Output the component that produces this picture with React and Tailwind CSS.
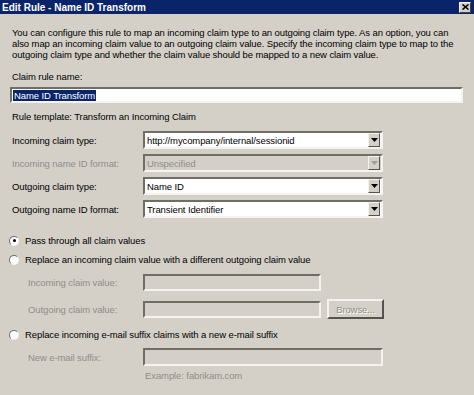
import React from 'react';

const sunken = 'border-2 border-t-[#6f6d68] border-l-[#6f6d68] border-b-[#f4f3f0] border-r-[#f4f3f0]';
const raised = 'border-2 border-t-[#f4f3f0] border-l-[#f4f3f0] border-b-[#55534f] border-r-[#55534f]';

function Arrow({ disabled }) {
    return (
        <svg width="7" height="4" viewBox="0 0 7 4">
            <path d="M0 0H7L3.5 4Z" fill={disabled ? '#a09e98' : '#000'} />
        </svg>
    );
}

function Combo({ value, disabled }) {
    return (
        <div className={`flex h-[18px] w-[240px] items-center ${sunken} ${disabled ? 'bg-[#d4d0c8] text-[#908e88]' : 'bg-white text-black'}`}>
            <span className="flex-1 truncate pl-[2px]">{value}</span>
            <div className="mr-[1px] flex h-[14px] w-[12px] items-center justify-center border border-t-[#f4f3f0] border-l-[#f4f3f0] border-b-[#55534f] border-r-[#55534f] bg-[#d4d0c8]">
                <Arrow disabled={disabled} />
            </div>
        </div>
    );
}

function Row({ label, disabled, children, className = '' }) {
    return (
        <div className={`flex items-center ${className}`}>
            <span className={`w-[131px] shrink-0 ${disabled ? 'text-[#908e88]' : ''}`}>{label}</span>
            {children}
        </div>
    );
}

function Radio({ checked, label, className = '' }) {
    return (
        <div className={`flex h-[11px] items-center ${className}`}>
            <span className="ml-[-3px] mr-[6px] flex h-[10px] w-[10px] items-center justify-center rounded-full border border-t-[#6f6d68] border-l-[#6f6d68] border-b-[#f4f3f0] border-r-[#f4f3f0] bg-white">
                {checked && <span className="h-[3px] w-[3px] rounded-full bg-black" />}
            </span>
            <span>{label}</span>
        </div>
    );
}

export default function App() {
    return (
        <div
            className="h-[395px] w-[474px] overflow-hidden bg-[#d4d0c8] text-[9.5px] leading-[11px] tracking-[-0.1px] text-black"
            style={{ fontFamily: '"Liberation Sans", Arial, sans-serif' }}
        >
            {/* title bar */}
            <div className="flex h-[14px] items-center justify-between bg-[#0a246a] pl-[2px] pr-[3px]">
                <span className="text-[10px] font-bold tracking-normal text-white">Edit Rule - Name ID Transform</span>
                <div className="flex h-[11px] w-[12px] items-center justify-center border border-t-[#f4f3f0] border-l-[#f4f3f0] border-b-[#404040] border-r-[#404040] bg-[#d4d0c8]">
                    <svg width="7" height="6" viewBox="0 0 7 6">
                        <path d="M0.5 0.5L6.5 5.5M6.5 0.5L0.5 5.5" stroke="#000" strokeWidth="1.6" />
                    </svg>
                </div>
            </div>

            <div className="px-[12px]">
                <div className="mt-[13px] whitespace-nowrap">
                    <p>You can configure this rule to map an incoming claim type to an outgoing claim type. As an option, you can</p>
                    <p>also map an incoming claim value to an outgoing claim value. Specify the incoming claim type to map to the</p>
                    <p>outgoing claim type and whether the claim value should be mapped to a new claim value.</p>
                </div>

                <p className="mt-[11px]">Claim rule name:</p>
                <div className={`ml-[-2px] mt-[5px] flex h-[16px] w-[453px] items-center bg-white ${sunken}`}>
                    <span className="ml-[1px] bg-[#0a246a] px-[1px] text-white">Name ID Transform</span>
                </div>

                <p className="mt-[8px]">Rule template: Transform an Incoming Claim</p>

                <div className="mt-[9px] flex flex-col gap-[5px]">
                    <Row label="Incoming claim type:">
                        <Combo value="http://mycompany/internal/sessionid" />
                    </Row>
                    <Row label="Incoming name ID format:" disabled>
                        <Combo value="Unspecified" disabled />
                    </Row>
                    <Row label="Outgoing claim type:">
                        <Combo value="Name ID" />
                    </Row>
                    <Row label="Outgoing name ID format:">
                        <Combo value="Transient Identifier" />
                    </Row>
                </div>

                <Radio checked label="Pass through all claim values" className="mt-[17px]" />
                <Radio label="Replace an incoming claim value with a different outgoing claim value" className="mt-[8px]" />

                <div className="mt-[9px] flex flex-col gap-[8px] pl-[16px]">
                    <Row label="Incoming claim value:" disabled>
                        <div className={`ml-[-16px] h-[17px] w-[178px] ${sunken}`} />
                    </Row>
                    <Row label="Outgoing claim value:" disabled>
                        <div className={`ml-[-16px] h-[17px] w-[178px] ${sunken}`} />
                        <div className={`ml-[6px] flex h-[20px] w-[57px] items-center justify-center text-[#908e88] [text-shadow:1px_1px_0_#fff] ${raised}`}>
                            Browse...
                        </div>
                    </Row>
                </div>

                <Radio label="Replace incoming e-mail suffix claims with a new e-mail suffix" className="mt-[10px]" />

                <div className="mt-[8px] pl-[16px]">
                    <Row label="New e-mail suffix:" disabled>
                        <div className={`ml-[-16px] h-[18px] w-[240px] ${sunken}`} />
                    </Row>
                    <p className="ml-[117px] mt-[4px] text-[#908e88]">Example: fabrikam.com</p>
                </div>
            </div>
        </div>
    );
}
